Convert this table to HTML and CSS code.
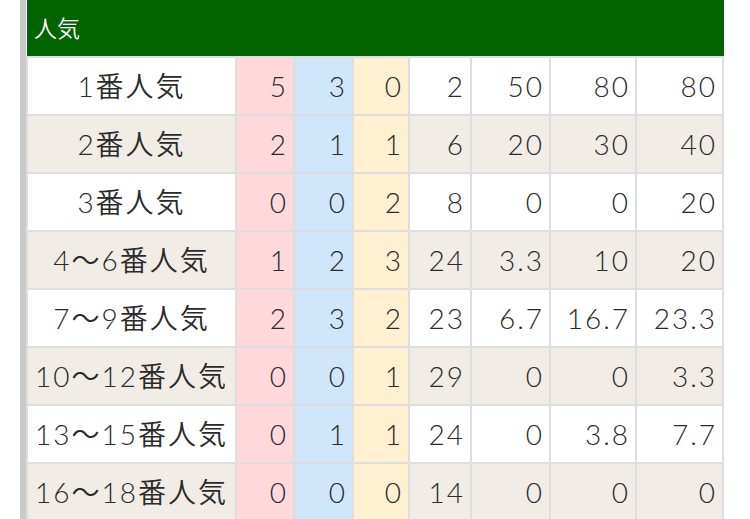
FILE: index.html
```html
<!DOCTYPE html>
<html lang="ja">
<head>
<meta charset="utf-8">
<link rel="stylesheet" href="styles.css">
</head>
<body>
<div class="wrap">
  <div class="head">人気</div>
  <table class="stats">
    <colgroup>
      <col class="c1"><col class="c2"><col class="c3"><col class="c4"><col class="c5"><col class="c6"><col class="c7"><col class="c8">
    </colgroup>
    <tbody>
      <tr><th>1番人気</th><td class="p">5</td><td class="b">3</td><td class="y">0</td><td>2</td><td>50</td><td>80</td><td>80</td></tr>
      <tr class="alt"><th>2番人気</th><td class="p">2</td><td class="b">1</td><td class="y">1</td><td>6</td><td>20</td><td>30</td><td>40</td></tr>
      <tr><th>3番人気</th><td class="p">0</td><td class="b">0</td><td class="y">2</td><td>8</td><td>0</td><td>0</td><td>20</td></tr>
      <tr class="alt"><th>4〜6番人気</th><td class="p">1</td><td class="b">2</td><td class="y">3</td><td>24</td><td>3.3</td><td>10</td><td>20</td></tr>
      <tr><th>7〜9番人気</th><td class="p">2</td><td class="b">3</td><td class="y">2</td><td>23</td><td>6.7</td><td>16.7</td><td>23.3</td></tr>
      <tr class="alt"><th>10〜12番人気</th><td class="p">0</td><td class="b">0</td><td class="y">1</td><td>29</td><td>0</td><td>0</td><td>3.3</td></tr>
      <tr><th>13〜15番人気</th><td class="p">0</td><td class="b">1</td><td class="y">1</td><td>24</td><td>0</td><td>3.8</td><td>7.7</td></tr>
      <tr class="alt"><th>16〜18番人気</th><td class="p">0</td><td class="b">0</td><td class="y">0</td><td>14</td><td>0</td><td>0</td><td>0</td></tr>
    </tbody>
  </table>
</div>
</body>
</html>
```
FILE: styles.css
```css
html, body {
  margin: 0;
  padding: 0;
  background: #fff;
}
body {
  font-family: Lato, "Noto Sans CJK JP", sans-serif;
  color: #2a2a2a;
}
.wrap {
  margin-left: 20px;
  width: 698px;
  border-left: 6px solid #c9c9c9;
  min-height: 519px;
}
.head {
  height: 56px;
  background: #006400;
  color: #fff;
  font-size: 23px;
  font-weight: 350;
  line-height: 56px;
  padding-left: 7px;
  margin-left: 1px;
}
.stats {
  table-layout: fixed;
  width: 698px;
  border-collapse: separate;
  border-spacing: 2px;
  background: #dedede;
  margin: 0;
}
.c1 { width: 207px; }
.c2 { width: 56px; }
.c3 { width: 57px; }
.c4 { width: 54px; }
.c5 { width: 60px; }
.c6 { width: 77px; }
.c7 { width: 84px; }
.c8 { width: 85px; }
.stats th, .stats td {
  height: 56px;
  padding: 0 5px 0 0;
  font-size: 28px;
  font-weight: 350;
  letter-spacing: 2px;
  line-height: 56px;
  white-space: nowrap;
  background: #fff;
}
.stats th {
  text-align: center;
  padding: 0;
}
.stats td {
  text-align: right;
}
.stats tr.alt th, .stats tr.alt td {
  background: #f1ece6;
}
.stats td.p, .stats tr.alt td.p { background: #ffd8dc; }
.stats td.b, .stats tr.alt td.b { background: #d0e6fb; }
.stats td.y, .stats tr.alt td.y { background: #fff0d2; }
```
